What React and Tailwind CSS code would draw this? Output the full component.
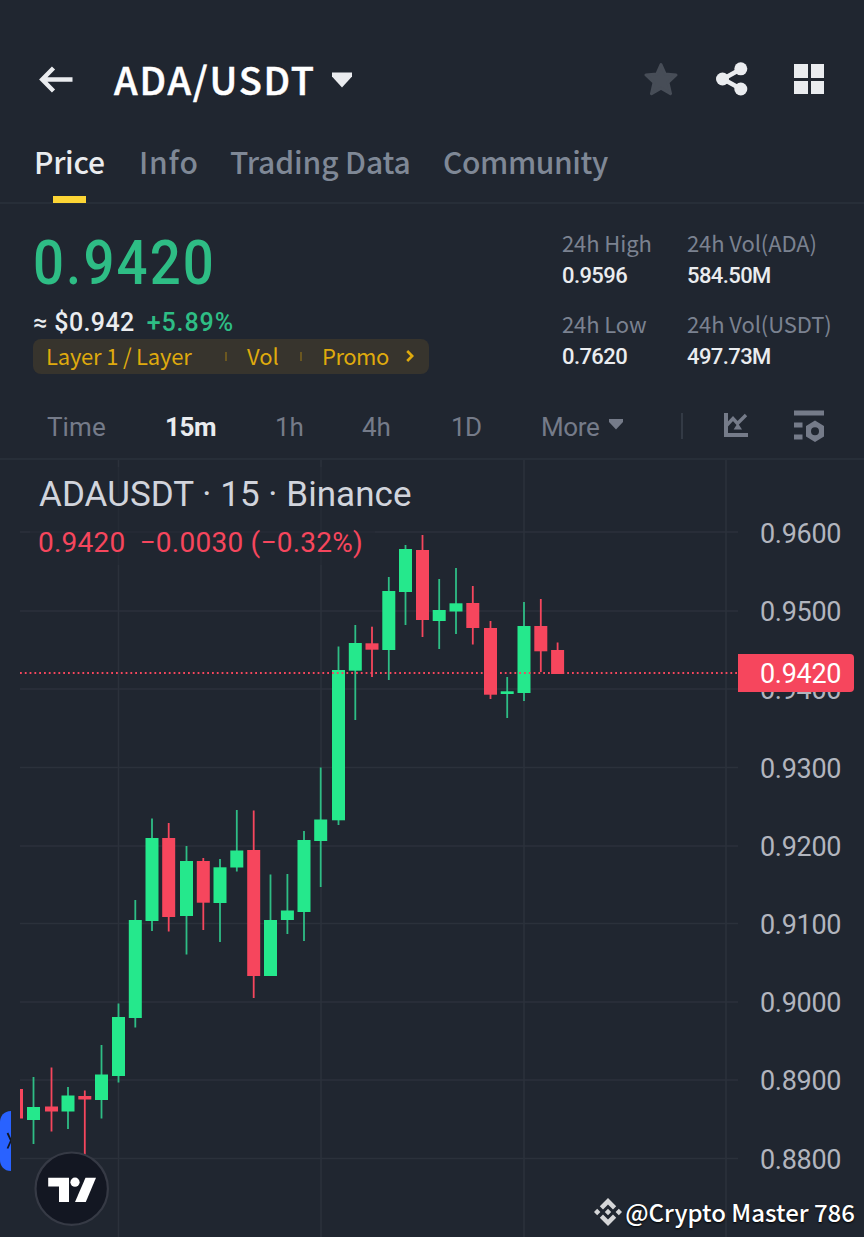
const UP = '#25e88c';
const DOWN = '#f6465d';

const tabs = [
  { label: 'Price', className: 'w-[105px] tracking-[-0.3px] text-[#eaecef]' },
  { label: 'Info', className: 'w-[91px] tracking-[0.8px]' },
  { label: 'Trading Data', className: 'w-[213px] tracking-[-0.1px]' },
  { label: 'Community', className: 'w-[170px] tracking-[-0.4px]' },
];

const stats = [
  { label: '24h High', value: '0.9596' },
  { label: '24h Vol(ADA)', value: '584.50M' },
  { label: '24h Low', value: '0.7620' },
  { label: '24h Vol(USDT)', value: '497.73M' },
];

const intervals = [
  { label: 'Time', className: 'w-[118px] tracking-[0.1px]' },
  { label: '15m', className: 'w-[110px] font-bold tracking-[-0.4px] text-[#eaecef]' },
  { label: '1h', className: 'w-[87px]' },
  { label: '4h', className: 'w-[89px]' },
  { label: '1D', className: 'w-[90px] tracking-[-0.5px]' },
];

const prices = ['0.9600', '0.9500', '0.9400', '0.9300', '0.9200', '0.9100', '0.9000', '0.8900', '0.8800'];

const gridRows = [532, 611, 689, 767.5, 846, 923.5, 1002, 1080, 1158.5];
const gridCols = [118.5, 321, 524, 726];

// [center, wick top, body top, body bottom, wick bottom, rising]
const candles = [
  [33.5, 1077, 1107, 1120, 1144, 1],
  [51.5, 1067.5, 1106.5, 1111.5, 1131.5, 0],
  [68, 1087, 1095.5, 1111.5, 1129, 1],
  [84.8, 1090.5, 1096, 1099.5, 1156, 0],
  [101.5, 1045, 1074.5, 1100, 1118.5, 1],
  [118.5, 1003.5, 1017, 1076, 1082.5, 1],
  [135.3, 900, 920, 1018, 1027.5, 1],
  [152, 818.5, 838, 921, 931, 1],
  [168.7, 823, 838, 917, 931.5, 0],
  [186.5, 846, 861, 916, 954.5, 1],
  [203.3, 858, 861, 902.7, 930, 0],
  [220, 859, 867.3, 903, 942, 1],
  [236.8, 810, 850.5, 867.5, 871.5, 1],
  [253.7, 810.5, 850, 976, 998, 0],
  [270.5, 874.5, 920, 976, 976, 1],
  [287.4, 874, 910.5, 920, 934, 1],
  [304, 831, 840, 912, 941, 1],
  [320.7, 767.5, 819.5, 841, 887, 1],
  [338.5, 646.5, 670, 820.3, 825, 1],
  [355.3, 625, 643, 670.7, 720, 1],
  [372, 626.7, 643.3, 649.7, 677, 0],
  [388.8, 577, 591, 650, 680, 1],
  [405.5, 545, 549, 592, 625, 1],
  [422.5, 535, 550, 620, 637, 0],
  [439.2, 579, 610, 621, 649, 1],
  [456, 568, 603.3, 611.5, 634, 1],
  [472.8, 586, 603, 628, 644.5, 0],
  [490.5, 621, 628, 694.7, 699, 0],
  [507.2, 677, 691.3, 694, 718, 1],
  [524, 602, 626, 693, 701, 1],
  [540.8, 599, 626, 651.3, 672, 0],
  [557.6, 642.5, 650, 674, 674, 0],
];

const Header = () => (
  <header className="flex h-[124px] items-center pt-[34px] pl-[39px] pr-[40px] text-[#eaecef]">
    <svg className="mt-[2px] h-[28px] w-[36px]" viewBox="0 0 36 28" fill="none" stroke="currentColor" strokeWidth="4.4">
      <path d="M33.5 13.5H4M14.5 2L3.2 13.5L14.5 25" />
    </svg>
    <h1 className="ml-[39px] w-[217px] whitespace-nowrap font-['Noto_Sans_CJK_SC',sans-serif] text-[38px] font-medium leading-none tracking-[1.8px] text-white [-webkit-text-stroke:0.5px_white]">
      ADA/USDT
    </h1>
    <svg className="mt-[1px] h-[18px] w-[22px]" viewBox="0 0 22 18" fill="currentColor">
      <path d="M1 1.5H21V5.5L11 16.5L1 5.5Z" />
    </svg>
    <div className="ml-auto flex items-center">
      <svg className="h-[34px] w-[34px]" viewBox="0 0 34 34" fill="#474d57" stroke="#474d57" strokeWidth="3" strokeLinejoin="round">
        <path d="M17 2.5L21.2 12L32 13L24 20.5L26.5 31.7L17 26.2L7.5 31.7L10 20.5L2 13L12.8 12Z" />
      </svg>
      <svg className="ml-[37px] h-[34px] w-[34px]" viewBox="0 0 34 34" fill="currentColor">
        <path d="M8 17L26 7M8 17L26 27" stroke="currentColor" strokeWidth="4.4" />
        <circle cx="7.5" cy="17" r="6.5" />
        <circle cx="25.8" cy="6.8" r="6.5" />
        <circle cx="25.8" cy="27" r="6.5" />
      </svg>
      <div className="ml-[45px] grid grid-cols-2 gap-[3px]">
        <span className="size-[13.5px] bg-[#eaecef]" />
        <span className="size-[13.5px] bg-[#eaecef]" />
        <span className="size-[13.5px] bg-[#eaecef]" />
        <span className="size-[13.5px] bg-[#eaecef]" />
      </div>
    </div>
  </header>
);

const Tabs = () => (
  <nav className="flex h-[80px] border-b-2 border-[#272e38] pl-[34px] font-['Noto_Sans_CJK_SC',sans-serif] text-[30px] font-medium text-[#7f8896]">
    {tabs.map((tab, index) => (
      <div key={tab.label} className={`flex h-[79px] flex-col justify-between whitespace-nowrap ${tab.className}`}>
        <span className="mt-[15px] leading-[44px]">{tab.label}</span>
        {index === 0 && <span className="ml-[19px] h-[7px] w-[33px] bg-[#fcd535]" />}
      </div>
    ))}
  </nav>
);

const Summary = () => (
  <section className="flex h-[190px] pl-[33px]">
    <div className="w-[529px] pt-[26px]">
      <div className="origin-left scale-x-[0.88] font-['Roboto',sans-serif] text-[62px] font-medium leading-[66px] tracking-[2.4px] text-[#2ebd85]">0.9420</div>
      <div className="mt-[11px] flex gap-[12px] whitespace-nowrap font-['Roboto',sans-serif] text-[25px] font-medium leading-[32px]">
        <span className="tracking-[0.4px] text-[#eaecef]">≈ $0.942</span>
        <span className="tracking-[0.9px] text-[#2ebd85]">+5.89%</span>
      </div>
      <div className="flex h-[35px] w-[396px] items-center rounded-lg bg-[#37342d] pl-[13px] font-['Noto_Sans_CJK_SC',sans-serif] text-[22px] text-[#dfaa0d]">
        <span className="mb-[4px] w-[179px] whitespace-nowrap leading-[30px] tracking-[-0.2px]">Layer 1 / Layer</span>
        <span className="h-[9px] w-[2px] bg-[#6b5720]" />
        <span className="mb-[4px] ml-[20px] w-[53px] leading-[30px]">Vol</span>
        <span className="h-[9px] w-[2px] bg-[#6b5720]" />
        <span className="mb-[4px] ml-[20px] w-[84px] leading-[30px] tracking-[-0.5px]">Promo</span>
        <svg className="mb-[1px] h-[12px] w-[8px]" viewBox="0 0 8 12" fill="none" stroke="currentColor" strokeWidth="2.6">
          <path d="M1.2 1L6.2 6L1.2 11" />
        </svg>
      </div>
    </div>
    <div className="grid h-fit grid-cols-[125px_170px] gap-y-[16px] pt-[22px]">
      {stats.map((stat) => (
        <div key={stat.label} className="h-[65px] whitespace-nowrap">
          <p className="font-['Noto_Sans_CJK_SC',sans-serif] text-[22px] leading-[32px] tracking-[-0.1px] text-[#7b8290]">{stat.label}</p>
          <p className="mt-[2px] font-['Roboto',sans-serif] text-[22px] font-medium leading-[32px] tracking-[-0.6px] text-[#eaecef]">{stat.value}</p>
        </div>
      ))}
    </div>
  </section>
);

const Intervals = () => (
  <div className="flex h-[66px] items-center border-b-2 border-[#272e38] pl-[47px] font-['Roboto',sans-serif] text-[26px] text-[#757b89]">
    {intervals.map((item) => (
      <span key={item.label} className={`mt-[2px] ${item.className}`}>{item.label}</span>
    ))}
    <span className="mt-[2px] w-[67px] tracking-[-0.4px]">More</span>
    <svg className="mb-[4px] h-[12px] w-[16px]" viewBox="0 0 16 12" fill="currentColor">
      <path d="M1 1H15V4L8 11.5L1 4Z" />
    </svg>
    <span className="ml-[57px] h-[26px] w-[2px] bg-[#333a45]" />
    <svg className="mb-[2px] ml-[40px] h-[26px] w-[26px]" viewBox="0 0 26 26" fill="none" stroke="currentColor">
      <path d="M3 1V23H25" strokeWidth="4" />
      <path d="M3.5 13.5L10 6.5L14.5 11.5L23 3" strokeWidth="3.4" />
      <path d="M14.8 11L19 17.5H10.6Z" fill="currentColor" stroke="none" />
    </svg>
    <svg className="ml-[44px] h-[32px] w-[32px]" viewBox="0 0 32 32" fill="currentColor">
      <path d="M1 0.5H31V5.5H1ZM1 12.5H9.5V17.5H1ZM1 24.5H9.5V29.5H1Z" />
      <path fillRule="evenodd" d="M22 10.5L31 16V26.5L22 32L13 26.5V16ZM22 17.2A4 4 0 1 0 22 25.2A4 4 0 1 0 22 17.2Z" />
    </svg>
  </div>
);

const CandleChart = () => (
  <svg className="h-[777px] w-[738px]" viewBox="0 460 738 777">
    <g stroke="#2b313b" strokeWidth="1.6">
      {gridRows.map((y) => (
        <line key={y} x1="20" x2="738" y1={y} y2={y} />
      ))}
      {gridCols.map((x) => (
        <line key={x} x1={x} x2={x} y1="460" y2="1237" />
      ))}
    </g>
    <rect x="30" y="467" width="345" height="98" fill="#202630" opacity="0.5" />
    <rect x="20" y="1089" width="3" height="29.5" fill={DOWN} />
    {candles.map(([x, high, top, bottom, low, rising]) => (
      <g key={x}>
        <rect x={x - 0.9} y={high} width="1.8" height={low - high} fill={rising ? '#2ebd85' : DOWN} />
        <rect x={x - 6.5} y={top} width="13" height={bottom - top} fill={rising ? UP : DOWN} />
      </g>
    ))}
    <line x1="20" x2="738" y1="673" y2="673" stroke={DOWN} strokeWidth="1.8" strokeDasharray="1.8 3" />
  </svg>
);

const Chart = () => (
  <section className="relative flex h-[777px] font-['Roboto',sans-serif]">
    <CandleChart />
    <div className="flex w-[126px] flex-col pt-[35px] pl-[22px] text-[27px] tracking-[-0.3px] text-[#b2b5be]">
      {prices.map((price) => (
        <span key={price} className="h-[78.2px] leading-[78px]">{price}</span>
      ))}
    </div>
    <div className="absolute left-[738px] top-[194px] h-[38px] w-[116px] rounded-r-[4px] bg-[#f6465d] pl-[22px] text-[27px] leading-[40px] tracking-[-0.3px] text-white">
      0.9420
    </div>
    <div className="absolute left-[38px] top-[13px] whitespace-nowrap">
      <p className="pl-[1px] text-[35px] leading-[44px] tracking-[0.05px] text-[#d1d4dc]">ADAUSDT · 15 · Binance</p>
      <p className="mt-[9px] flex gap-[14px] text-[28px] leading-[34px] tracking-[0.25px] text-[#f6465d]">
        <span>0.9420</span>
        <span>−0.0030 (−0.32%)</span>
      </p>
    </div>
    <svg className="absolute left-0 top-[651px] h-[60px] w-[11px]" viewBox="0 0 11 60">
      <path d="M11 0C4 0 0 5 0 11V49C0 55 4 60 11 60Z" fill="#2962ff" />
      <path d="M7.5 22L11 29.5L7.5 37.5" fill="none" stroke="#131722" strokeWidth="1.8" />
    </svg>
    <svg className="absolute left-[34px] top-[691px] h-[76px] w-[76px]" viewBox="0 0 76 76">
      <circle cx="37.7" cy="37.7" r="36.2" fill="#131722" stroke="#363a45" strokeWidth="2.2" />
      <g fill="#fff">
        <path d="M14.2 26.7H35V51H25V35.5H14.2Z" />
        <circle cx="41" cy="31.2" r="4.6" />
        <path d="M51.5 26.7H62L51.8 51H41Z" />
      </g>
    </svg>
    <div className="absolute bottom-[7px] right-[9px] flex items-center gap-[3px] whitespace-nowrap font-['Noto_Sans_CJK_SC',sans-serif] text-[24px] font-medium leading-[36px] text-white">
      <svg className="h-[28px] w-[28px]" viewBox="0 0 28 28" fill="#d4d5d7">
        <path d="M14 0L22.2 8.2L19 11.4L14 6.4L9 11.4L5.8 8.2Z" />
        <path d="M14 28L5.8 19.8L9 16.6L14 21.6L19 16.6L22.2 19.8Z" />
        <path d="M3.2 10.8L6.4 14L3.2 17.2L0 14ZM24.8 10.8L28 14L24.8 17.2L21.6 14ZM14 10.8L17.2 14L14 17.2L10.8 14Z" />
      </svg>
      <span className="[text-shadow:0_1px_2px_#000]">@Crypto Master 786</span>
    </div>
  </section>
);

const App = () => (
  <main className="h-[1237px] w-[864px] overflow-hidden bg-[#202630]">
    <Header />
    <Tabs />
    <Summary />
    <Intervals />
    <Chart />
  </main>
);

export default App;
